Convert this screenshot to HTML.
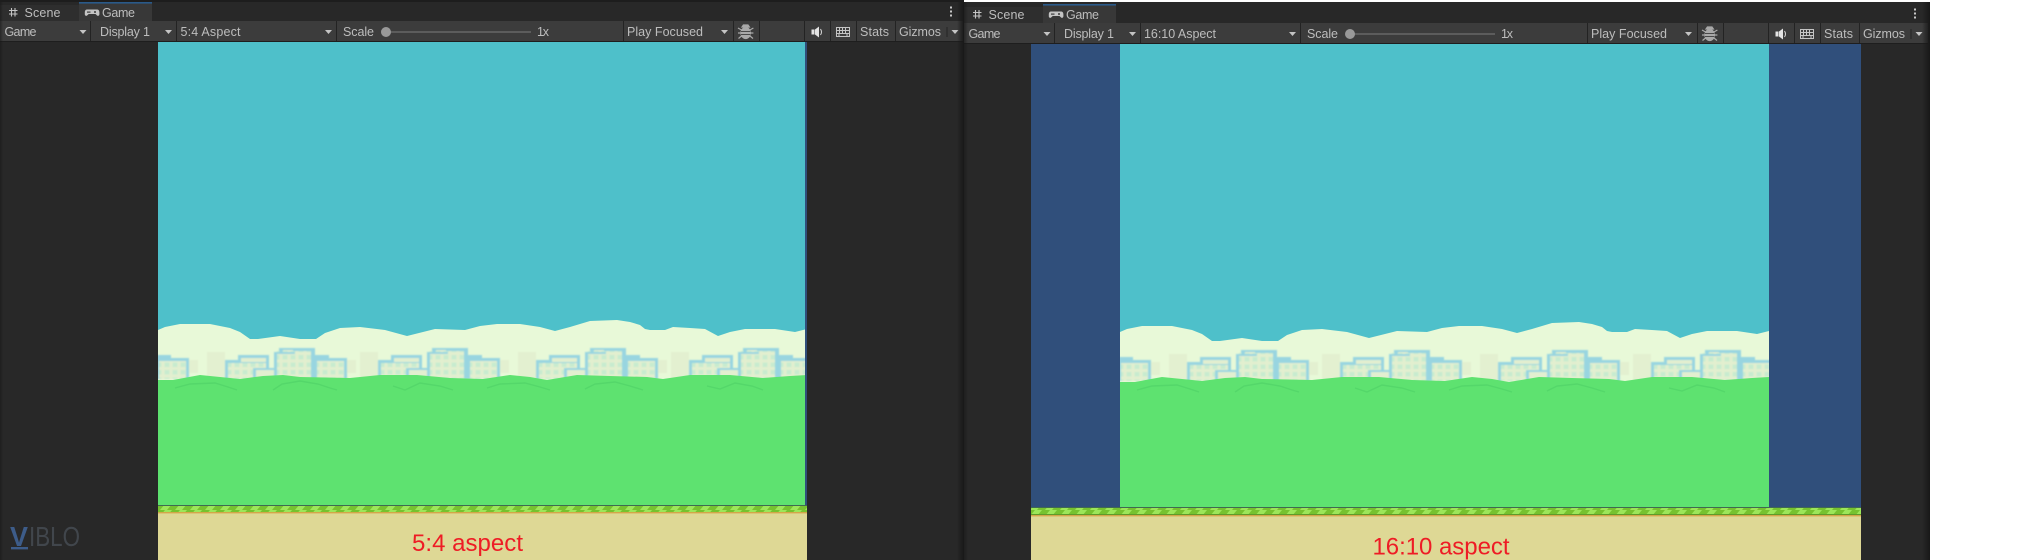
<!DOCTYPE html>
<html><head><meta charset="utf-8"><title>Aspect comparison</title>
<style>
html,body{margin:0;padding:0;background:#fff;width:2020px;height:560px;overflow:hidden}
svg{display:block}
text{font-family:"Liberation Sans",sans-serif}
.t{font-size:12.5px;fill:#bdbdbd}
.s{stroke:#232323;stroke-width:1}
</style></head><body>
<svg width="2020" height="560" viewBox="0 0 2020 560" xmlns="http://www.w3.org/2000/svg">
<defs>
<clipPath id="sc"><rect x="158" y="42" width="649" height="463"/></clipPath>
<filter id="soft" x="-5%" y="-5%" width="110%" height="110%"><feGaussianBlur stdDeviation="0.7"/></filter>
<pattern id="win" x="0" y="1" width="8" height="7.5" patternUnits="userSpaceOnUse"><rect x="1.5" y="1.5" width="5" height="4.5" fill="#c8ebcf"/></pattern>
<pattern id="st" x="158" y="0" width="15" height="6" patternUnits="userSpaceOnUse"><rect width="15" height="6" fill="#76c22f"/><polygon points="2,6 7,0 14,0 9,6" fill="#9ce659"/></pattern>
<linearGradient id="fr" x1="0" x2="1" y1="0" y2="0"><stop offset="0" stop-color="#181818" stop-opacity="0"/><stop offset="1" stop-color="#181818"/></linearGradient>
<linearGradient id="fl" x1="0" x2="1" y1="0" y2="0"><stop offset="0" stop-color="#181818" stop-opacity=".6"/><stop offset="1" stop-color="#181818" stop-opacity="0"/></linearGradient>

<g id="bld">
  <rect x="-18" y="352" width="18" height="26" fill="#e3f0d0"/>
  <rect x="121" y="360" width="10" height="13" fill="#e3f0d0"/>
  <rect x="0" y="360" width="44" height="19" fill="#98d5e0"/>
  <rect x="3" y="363" width="38" height="16" fill="#e2efcf"/>
  <rect x="13" y="355" width="31" height="8" fill="#98d5e0"/>
  <rect x="16" y="358" width="25" height="4" fill="#e2efcf"/>
  <rect x="3" y="363" width="38" height="16" fill="url(#win)"/>
  <rect x="28" y="368" width="21" height="11" fill="#98d5e0"/>
  <rect x="31" y="370" width="18" height="9" fill="#e2efcf"/>
  <rect x="49" y="352" width="40" height="27" fill="#98d5e0"/>
  <rect x="54" y="348" width="36" height="31" fill="#98d5e0"/>
  <rect x="52" y="354" width="34" height="25" fill="#e2efcf"/>
  <rect x="58" y="350" width="10" height="2" fill="#e2efcf"/>
  <rect x="70" y="351" width="16" height="4" fill="#e2efcf"/>
  <rect x="52" y="351" width="34" height="28" fill="url(#win)"/>
  <rect x="89" y="355" width="15" height="24" fill="#98d5e0"/>
  <rect x="89" y="358" width="33" height="21" fill="#98d5e0"/>
  <rect x="92" y="361" width="27" height="18" fill="#e2efcf"/>
  <rect x="92" y="361" width="27" height="18" fill="url(#win)"/>
</g>

<g id="scene" clip-path="url(#sc)">
  <rect x="158" y="42" width="649" height="463" fill="#4ec0ca"/>
  <polygon fill="#e8f9d8" points="158,330 165,327 180,324 210,324 230,328 240,332 250,339 258,339 280,336 300,339 316,339 325,333 340,328 360,327 385,330 407,336 435,329 465,330 480,326 497,324 520,324 540,327 555,331 570,327 590,321 617,320 630,322 640,325 645,329 650,330 665,330 673,327 690,328 705,329 718,336 730,332 745,329 775,329 795,332 807,329 807,390 158,390"/>
  <g filter="url(#soft)"><use href="#bld" x="67"/><use href="#bld" x="225"/><use href="#bld" x="378"/><use href="#bld" x="536"/><use href="#bld" x="689"/></g>
  <polygon fill="#5ee270" points="158,380 173,380 200,375 220,377 240,379 263,376 283,375 300,377 350,378 380,375 417,375 450,378 483,379 510,375 530,377 547,380 577,375 610,376 647,377 663,379 690,375 730,375 763,378 790,376 807,375 807,510 158,510"/>
  <g fill="none" stroke="#54d76a" stroke-width="1.4">
    <polyline points="175,388 190,384 215,383 228,387 237,390"/>
    <polyline points="273,390 282,384 300,381 318,384 330,388 337,390"/>
    <polyline points="393,386 405,390 420,383 440,386 453,390"/>
    <polyline points="487,388 500,384 525,383 540,387 550,390"/>
    <polyline points="585,389 595,384 615,382 630,386 643,390"/>
    <polyline points="707,386 720,389 735,383 752,386 763,390"/>
  </g>
</g>

<g id="arw"><polygon points="0,0 7,0 3.5,4" fill="#c4c4c4"/></g>
<g id="hash" stroke="#c4c4c4" stroke-width="1.1" fill="none"><path d="M11.5 8v8.5M15 8v8.5M9 10.5h8.5M9 14h8.5"/></g>
<g id="pad"><path d="M87 9.5h10c1.5 0 2.4 1 2.4 3v1.8c0 1.6-1.6 2.1-2.6 1l-1.3-1.3h-6.8l-1.3 1.3c-1 1.1-2.6.6-2.6-1v-1.8c0-2 1-3 2.2-3z" fill="#c4c4c4"/><circle cx="95" cy="12" r="1" fill="#3c3c3c"/><rect x="87" y="11.5" width="3.5" height="1.2" fill="#3c3c3c"/></g>
<g id="bug" fill="none" stroke="#a9a9a9" stroke-width="1.2"><ellipse cx="745.7" cy="33" rx="4.7" ry="5.5" fill="#a9a9a9"/><path d="M742 27h7.4l-1.4-2h-4.6z" fill="#a9a9a9"/><path d="M738 28l3.5 2M753.4 28l-3.5 2M738 33h3M753.4 33h-3M738.5 38.5l3-2.5M753 38.5l-3-2.5"/><path d="M741 31.5h9.4M741 34.5h9.4" stroke="#4a4a4a" stroke-width=".9"/></g>
<g id="aud"><rect x="811.5" y="29.5" width="3" height="5" fill="#e4e4e4"/><polygon points="815,29.5 819,26.5 819,37.5 815,34.5" fill="#e4e4e4"/><path d="M820.5 29c1.2 1.8 1.2 4.2 0 6" stroke="#d8d8d8" fill="none" stroke-width="1"/></g>
<g id="kbd" fill="none" stroke="#c4c4c4" stroke-width="1"><rect x="836.5" y="27.5" width="13" height="9"/><path d="M836.5 30.5h13M836.5 33.5h13M839.5 27.5v6M842.5 27.5v6M845.5 27.5v6M839 33.5v3M847 33.5v3"/></g>
<g id="dots" fill="#c8c8c8"><rect x="950" y="6.5" width="2" height="2"/><rect x="950" y="10.5" width="2" height="2"/><rect x="950" y="14.5" width="2" height="2"/></g>
</defs>

<!-- LEFT PANEL -->
<rect x="0" y="0" width="964" height="2" fill="#1d1d1d"/>
<rect x="0" y="2" width="964" height="558" fill="#282828"/>
<g>
  <rect x="0" y="5" width="79" height="16" fill="#2e2e2e"/>
  <rect x="79" y="2" width="73" height="19" fill="#383838"/>
  <rect x="79" y="2" width="73" height="1.6" fill="#2a5a8a"/>
  <use href="#hash"/><text class="t" x="24.5" y="17" textLength="36">Scene</text>
  <use href="#pad"/><text class="t" x="102" y="17" textLength="33">Game</text>
  <use href="#dots"/>
  <rect x="0" y="21" width="963" height="20" fill="#3c3c3c"/>
  <rect x="0" y="41" width="963" height="1" fill="#1e1e1e"/>
  <path class="s" d="M90.5 21v20M176.5 21v20M336.5 21v20M623.5 21v20M733.5 21v20M759.5 21v20M804.5 21v20M830.5 21v20M856.5 21v20M895.5 21v20"/>
  <text class="t" x="4.5" y="36" textLength="32">Game</text><use href="#arw" x="79.5" y="30"/>
  <text class="t" x="100" y="36" textLength="50">Display 1</text><use href="#arw" x="165" y="30"/>
  <text class="t" x="180.5" y="36" textLength="60">5:4 Aspect</text><use href="#arw" x="325" y="30"/>
  <text class="t" x="343" y="36" textLength="31">Scale</text>
  <rect x="386" y="31" width="145" height="2" fill="#5c5c5c"/><circle cx="386" cy="32" r="5" fill="#999"/>
  <text class="t" x="537" y="36" textLength="12">1x</text>
  <text class="t" x="627" y="36" textLength="76">Play Focused</text><use href="#arw" x="721" y="30"/>
  <use href="#bug"/><use href="#aud"/><use href="#kbd"/>
  <text class="t" x="860" y="36" textLength="29">Stats</text>
  <text class="t" x="899" y="36" textLength="42">Gizmos</text>
  <path d="M947 27v10" stroke="#232323"/><use href="#arw" x="951.5" y="30"/>
</g>
<use href="#scene"/>
<rect x="805" y="42" width="2" height="463" fill="#304f7b"/>
<rect x="158" y="505" width="649" height="55" fill="#ded895"/>
<rect x="158" y="505" width="649" height="1" fill="#3f6a52"/>
<rect x="158" y="506" width="649" height="6" fill="url(#st)"/>
<rect x="158" y="512" width="649" height="1.4" fill="#d3a648"/>
<text x="412" y="551" font-size="24" fill="#ee1c25" textLength="111">5:4 aspect</text>
<text x="10" y="546" font-size="28" font-weight="bold" fill="#3d5c89" textLength="18" lengthAdjust="spacingAndGlyphs">V</text>
<rect x="11" y="547" width="17" height="2.4" fill="#3d5c89"/>
<text x="29" y="546" font-size="27.5" fill="#41464c" textLength="51" lengthAdjust="spacingAndGlyphs">IBLO</text>
<rect x="0" y="2" width="3" height="558" fill="url(#fl)"/>
<rect x="957" y="2" width="7" height="558" fill="url(#fr)"/>

<!-- RIGHT PANEL -->
<rect x="964" y="2" width="966" height="558" fill="#282828"/>
<g transform="translate(964 2)">
  <rect x="0" y="5" width="79" height="16" fill="#2e2e2e"/>
  <rect x="79" y="2" width="73" height="19" fill="#383838"/>
  <rect x="79" y="2" width="73" height="1.6" fill="#2a5a8a"/>
  <use href="#hash"/><text class="t" x="24.5" y="17" textLength="36">Scene</text>
  <use href="#pad"/><text class="t" x="102" y="17" textLength="33">Game</text>
  <use href="#dots"/>
  <rect x="0" y="21" width="964" height="20" fill="#3c3c3c"/>
  <rect x="0" y="41" width="964" height="1" fill="#1e1e1e"/>
  <path class="s" d="M90.5 21v20M176.5 21v20M336.5 21v20M623.5 21v20M733.5 21v20M759.5 21v20M804.5 21v20M830.5 21v20M856.5 21v20M895.5 21v20"/>
  <text class="t" x="4.5" y="36" textLength="32">Game</text><use href="#arw" x="79.5" y="30"/>
  <text class="t" x="100" y="36" textLength="50">Display 1</text><use href="#arw" x="165" y="30"/>
  <text class="t" x="180" y="36" textLength="72">16:10 Aspect</text><use href="#arw" x="325" y="30"/>
  <text class="t" x="343" y="36" textLength="31">Scale</text>
  <rect x="386" y="31" width="145" height="2" fill="#5c5c5c"/><circle cx="386" cy="32" r="5" fill="#999"/>
  <text class="t" x="537" y="36" textLength="12">1x</text>
  <text class="t" x="627" y="36" textLength="76">Play Focused</text><use href="#arw" x="721" y="30"/>
  <use href="#bug"/><use href="#aud"/><use href="#kbd"/>
  <text class="t" x="860" y="36" textLength="29">Stats</text>
  <text class="t" x="899" y="36" textLength="42">Gizmos</text>
  <path d="M947 27v10" stroke="#232323"/><use href="#arw" x="951.5" y="30"/>
</g>
<rect x="1031" y="44" width="830" height="464" fill="#304f7b"/>
<use href="#scene" transform="translate(962 2)"/>
<rect x="1769" y="44" width="92" height="464" fill="#304f7b"/>
<rect x="1031" y="507" width="830" height="53" fill="#ded895"/>
<rect x="1031" y="507" width="830" height="1" fill="#3f6a52"/>
<rect x="1031" y="508" width="830" height="6" fill="url(#st)"/>
<rect x="1031" y="514" width="830" height="1" fill="#5e9a2c"/>
<rect x="1031" y="515" width="830" height="1.4" fill="#d3a648"/>
<text x="1372.5" y="554.5" font-size="24" fill="#ee1c25" textLength="137">16:10 aspect</text>
<rect x="964" y="2" width="4" height="558" fill="url(#fl)"/>
<rect x="1922" y="2" width="8" height="558" fill="url(#fr)"/>
</svg>
</body></html>
